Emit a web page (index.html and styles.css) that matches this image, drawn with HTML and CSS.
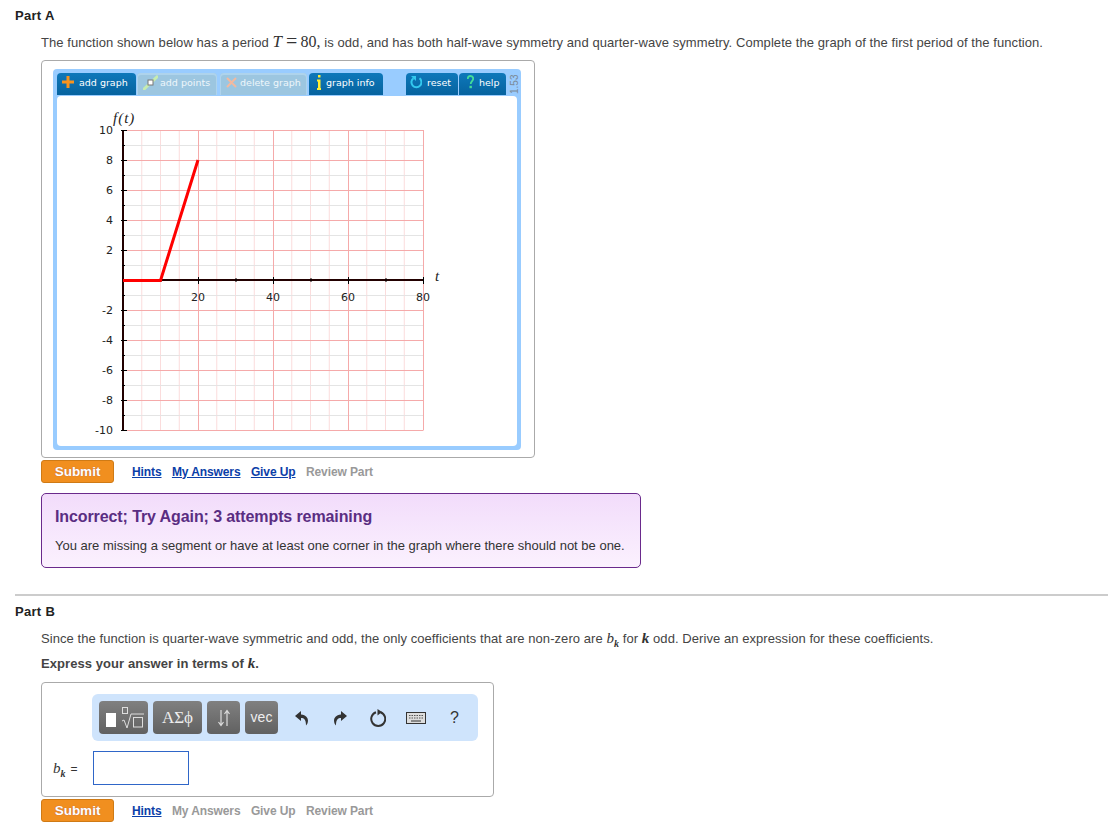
FILE: index.html
```html
<!DOCTYPE html>
<html lang="en">
<head>
<meta charset="utf-8">
<title>Part A and Part B</title>
<link rel="stylesheet" href="styles.css">
</head>
<body>
<section class="part part-a">
  <h2 class="part-title">Part A</h2>
  <p class="prompt">The function shown below has a period <span class="math big"><i class="var-t">T</i><span class="eq">=</span>80,</span> is odd, and has both half-wave symmetry and quarter-wave symmetry. Complete the graph of the first period of the function.</p>
  <div class="widget">
    <div class="tool-frame">
      <div class="toolbar">
        <button class="tool w-add"><svg class="ti" viewBox="0 0 12 12"><path d="M4.500 0h3v4.500H12v3H7.500V12h-3V7.500H0v-3h4.500z" fill="#f7931e"/></svg>add graph</button>
        <button class="tool off w-points"><svg class="ti" viewBox="0 0 15 15"><path d="M0 15 15 1" stroke="#c6ecb0" stroke-width="3"/><rect x="5" y="5" width="5" height="5" fill="#fff" stroke="#777"/></svg>add points</button>
        <button class="tool off w-delete"><svg class="ti" viewBox="0 0 11 11"><path d="M1 1l9 9M10 1 1 10" stroke="#f2b9a0" stroke-width="2"/></svg>delete graph</button>
        <button class="tool w-info"><svg class="ti" viewBox="0 0 4 16"><path d="M1 1h2.500v2.500H1zM0 5.500h3.500v8.500H4v2H0v-2h1V7.500H0z" fill="#ffee33"/></svg>graph info</button>
        <button class="tool w-reset"><svg class="ti" viewBox="0 0 12 14"><path d="M3.500 3.200a5 5 0 1 0 6 .1" fill="none" stroke="#33c8ee" stroke-width="2"/><path d="M1 1h5v5z" fill="#33c8ee"/></svg>reset</button>
        <button class="tool w-help"><svg class="ti" viewBox="0 0 7 14"><path d="M.8 4C.8 1.800 2 1 3.500 1s2.700 1 2.700 2.700c0 2.400-2.500 2.400-2.500 5.300" fill="none" stroke="#44dd99" stroke-width="1.800"/><rect x="2.500" y="10.800" width="2.400" height="2.400" fill="#44dd99"/></svg>help</button>
        <span class="version">1.53</span>
      </div>
      <div class="panel">
        <svg class="graph" viewBox="57 96 460 350" width="460" height="350">
          <path class="grid-minor-v" d="M141.750 130V430M160.500 130V430M179.250 130V430M216.750 130V430M235.500 130V430M254.250 130V430M291.750 130V430M310.500 130V430M329.250 130V430M366.750 130V430M385.500 130V430M404.250 130V430"/>
          <path class="grid-minor-h" d="M123 145.500H423M123 175.500H423M123 205.500H423M123 235.500H423M123 265.500H423M123 295.500H423M123 325.500H423M123 355.500H423M123 385.500H423M123 415.500H423"/>
          <path class="grid-major" d="M123 130.500H423.500M123 160.500H423.500M123 190.500H423.500M123 220.500H423.500M123 250.500H423.500M123 310.500H423.500M123 340.500H423.500M123 370.500H423.500M123 400.500H423.500M123 430.500H423.500M198.500 130V430M273.500 130V430M348.500 130V430M423.500 130V430"/>
          <path class="axis" d="M123 130V431M123 280H423"/>
          <path class="ticks" d="M121 130.500H127M121 160.500H127M121 190.500H127M121 220.500H127M121 250.500H127M121 310.500H127M121 340.500H127M121 370.500H127M121 400.500H127M121 430.500H127M198.500 277V284M273.500 277V284M348.500 277V284M423.500 277V284"/>
          <path class="ticks small" d="M122 145.500H125M122 175.500H125M122 205.500H125M122 235.500H125M122 265.500H125M122 295.500H125M122 325.500H125M122 355.500H125M122 385.500H125M122 415.500H125M161 278V282M236 278V282M311 278V282M386 278V282"/>
          <path class="curve" d="M123 280.500H160.500L198 160"/>
          <g class="labels">
            <text x="113" y="134" text-anchor="end">10</text>
            <text x="113" y="164" text-anchor="end">8</text>
            <text x="113" y="194" text-anchor="end">6</text>
            <text x="113" y="224" text-anchor="end">4</text>
            <text x="113" y="254" text-anchor="end">2</text>
            <text x="113" y="314" text-anchor="end">-2</text>
            <text x="113" y="344" text-anchor="end">-4</text>
            <text x="113" y="374" text-anchor="end">-6</text>
            <text x="113" y="404" text-anchor="end">-8</text>
            <text x="113" y="434" text-anchor="end">-10</text>
            <text x="198" y="301" text-anchor="middle">20</text>
            <text x="273" y="301" text-anchor="middle">40</text>
            <text x="348" y="301" text-anchor="middle">60</text>
            <text x="423" y="301" text-anchor="middle">80</text>
          </g>
          <text class="axis-name" x="113" y="123">f(t)</text>
          <text class="axis-name" x="435" y="281">t</text>
        </svg>
      </div>
    </div>
  </div>
  <div class="actions">
    <button class="submit">Submit</button>
    <a class="link" href="#">Hints</a>
    <a class="link" href="#">My Answers</a>
    <a class="link" href="#">Give Up</a>
    <span class="link-off">Review Part</span>
  </div>
  <div class="feedback">
    <h3 class="feedback-title">Incorrect; Try Again; 3 attempts remaining</h3>
    <p class="feedback-text">You are missing a segment or have at least one corner in the graph where there should not be one.</p>
  </div>
</section>
<hr class="divider">
<section class="part part-b">
  <h2 class="part-title">Part B</h2>
  <p class="prompt">Since the function is quarter-wave symmetric and odd, the only coefficients that are non-zero are <i class="math">b<sub>k</sub></i> for <i class="math bold">k</i> odd. Derive an expression for these coefficients.</p>
  <p class="instruction">Express your answer in terms of <i class="math">k</i>.</p>
  <div class="answer">
    <div class="editor-bar">
      <div class="eb-buttons">
        <span class="eb eb-root"><svg viewBox="0 0 49 33" width="49" height="33"><rect x="7" y="12" width="10" height="14" fill="#fff"/><rect x="23.500" y="6.500" width="5" height="6" fill="none" stroke="#ddd"/><path d="M23 20l2-1 3 8 4-14h13" fill="none" stroke="#ddd"/><rect x="34.500" y="16.500" width="9" height="9.500" fill="none" stroke="#ddd"/></svg></span>
        <span class="eb eb-greek">ΑΣϕ</span>
        <span class="eb eb-arrows"><svg viewBox="0 0 14 18" width="14" height="18"><path d="M4 1v15M1.500 13 4 16.500 6.500 13M10 17V2M7.500 5 10 1.500 12.500 5" fill="none" stroke="#ddd" stroke-width="1.200"/></svg></span>
        <span class="eb eb-vec">vec</span>
      </div>
      <div class="eb-actions">
        <svg class="act-undo" viewBox="0 0 14 16" width="14" height="16"><path d="M6 1 0 6l6 5V8c3 0 5 1.500 5 7.500 3-3 3.500-10-5-11z" fill="#333"/></svg>
        <svg class="act-redo" viewBox="0 0 14 16" width="14" height="16"><path d="M8 1l6 5-6 5V8c-3 0-5 1.500-5 7.500-3-3-3.500-10 5-11z" fill="#333"/></svg>
        <svg class="act-reset" viewBox="0 0 16 18" width="16" height="18"><path d="M6 3.300a7 7 0 1 0 4.500 0" fill="none" stroke="#333" stroke-width="2"/><path d="M7.500 0v6.500l4.500-3.500z" fill="#333"/></svg>
        <svg class="act-keys" viewBox="0 0 20 12" width="20" height="12"><rect x=".5" y=".5" width="19" height="11" fill="#ddd" stroke="#333"/><path d="M3 3.500h14M3 6h14" stroke="#555" stroke-dasharray="1.500 1"/><path d="M5 9h10" stroke="#333"/></svg>
        <span class="eb-help">?</span>
      </div>
    </div>
    <div class="answer-row">
      <label class="answer-label"><i class="math">b<sub>k</sub></i><span class="label-eq">=</span></label>
      <input class="answer-input" type="text" aria-label="answer">
    </div>
  </div>
  <div class="actions last">
    <button class="submit">Submit</button>
    <a class="link" href="#">Hints</a>
    <span class="link-off">My Answers</span>
    <span class="link-off">Give Up</span>
    <span class="link-off">Review Part</span>
  </div>
</section>
</body>
</html>
```
FILE: styles.css
```css
* { box-sizing: border-box; }
html, body { margin: 0; padding: 0; }
body {
  width: 1108px;
  height: 835px;
  overflow: hidden;
  background: #fff;
  color: #444;
  font-family: "Liberation Sans", Arial, sans-serif;
  font-size: 13px;
}
.part-a { padding-top: 8px; }
.part-title {
  margin: 0 0 0 15px;
  font-size: 13px;
  line-height: 15px;
  font-weight: bold;
  color: #222;
  letter-spacing: .3px;
}
.prompt {
  margin: 12px 0 0 41px;
  line-height: 16px;
  letter-spacing: .065px;
  white-space: nowrap;
}
.math { font-family: "Liberation Serif", serif; font-size: 15px; color: #333; }
.math.big { font-size: 16px; line-height: 0; }
.var-t { font-size: 17px; }
.eq { margin: 0 3px 0 4px; font-size: 20px; line-height: 0; vertical-align: -1px; }
.math.bold { font-weight: bold; }
.math sub { font-size: 10px; font-weight: bold; line-height: 0; }
.widget {
  width: 494px;
  height: 398px;
  margin: 9px 0 0 41px;
  padding: 8px 13px 7px 11px;
  border: 1px solid #aaa;
  border-radius: 4px;
}
.tool-frame {
  height: 381px;
  padding: 4px;
  background: #99ccff;
  border-radius: 4px;
}
.toolbar { display: flex; height: 22px; position: relative; }
.tool {
  display: flex;
  align-items: center;
  height: 22px;
  padding: 0 0 4px 0;
  border: 0;
  border-radius: 4px 4px 0 0;
  background: linear-gradient(#0e78ba, #06639f);
  color: #fff;
  font: 9.500px "DejaVu Sans", sans-serif;
  white-space: nowrap;
}
.tool.off {
  background: #9cc6e0;
  box-shadow: inset 0 1px 0 1px #aed3ec;
  color: #eef6fb;
}
.ti { flex: none; display: block; }
.w-add { width: 79px; padding-left: 5px; gap: 5px; }
.w-add .ti { width: 12px; height: 12px; }
.w-points { width: 80px; margin-left: 1px; padding-left: 6px; gap: 2px; }
.w-points .ti { width: 15px; height: 15px; }
.w-delete { width: 87px; margin-left: 3px; padding-left: 6px; gap: 3px; }
.w-delete .ti { width: 11px; height: 11px; }
.w-info { width: 74px; margin-left: 2px; padding-left: 8px; gap: 5px; }
.w-info .ti { width: 4px; height: 16px; }
.w-reset { width: 52px; margin-left: 23px; padding-left: 4px; gap: 5px; }
.w-reset .ti { width: 12px; height: 14px; }
.w-help { width: 47px; margin-left: 1px; padding-left: 8px; gap: 5px; }
.w-help .ti { width: 7px; height: 14px; }
.version {
  position: absolute;
  right: -4px;
  top: 0;
  width: 12px;
  height: 22px;
  writing-mode: vertical-rl;
  transform: rotate(180deg);
  font: 10px/12px "Liberation Sans", sans-serif;
  color: #7b8a99;
  text-align: center;
}
.panel {
  width: 460px;
  height: 350px;
  margin-top: 1px;
  background: #fff;
  border-radius: 4px;
}
.graph { display: block; }
.grid-minor-v { stroke: #fbdcdc; fill: none; }
.grid-minor-h { stroke: #e4e4e4; fill: none; }
.grid-major { stroke: #f5aaaa; fill: none; }
.axis { stroke: #200; stroke-width: 2; fill: none; }
.ticks { stroke: #000; fill: none; }
.curve { stroke: #f00; stroke-width: 3; fill: none; stroke-linejoin: round; }
.labels { font: 11px "DejaVu Sans", sans-serif; fill: #222; }
.axis-name { font: italic 15px "Liberation Serif", serif; fill: #222; letter-spacing: 1px; }
.actions {
  display: flex;
  align-items: center;
  height: 23px;
  margin: 2px 0 0 41px;
  font-size: 12px;
}
.submit {
  width: 73px;
  height: 23px;
  margin-right: 18px;
  padding: 0;
  border: 1px solid #cf7a15;
  border-radius: 3px;
  background: #f18f1f;
  color: #fff;
  font: bold 13.500px "Liberation Sans", Arial, sans-serif;
  text-shadow: 0 0 1px #a55;
}
.link {
  margin-right: 10.400px;
  color: #0b3ea8;
  font-weight: bold;
  letter-spacing: -.1px;
  text-decoration: underline;
}
.link-off {
  margin-right: 10.400px;
  color: #999;
  font-weight: bold;
  letter-spacing: -.1px;
}
.feedback {
  width: 600px;
  height: 75px;
  margin: 10px 0 0 41px;
  padding: 13px 13px 0;
  border: 1px solid #6a2a8c;
  border-radius: 5px;
  background: linear-gradient(#f2dcfb, #fbf1fe);
}
.feedback-title {
  margin: 0;
  color: #5a2d82;
  font-size: 16px;
  line-height: 20px;
  font-weight: bold;
  letter-spacing: -.1px;
}
.feedback-text {
  margin: 11px 0 0;
  color: #333;
  line-height: 16px;
  white-space: nowrap;
}
.divider {
  height: 2px;
  margin: 26px 0 0 15px;
  border: 0;
  background: #ccc;
}
.part-b { padding-top: 8px; }
.part-b .prompt { margin-top: 11px; }
.instruction {
  margin: 8px 0 0 41px;
  font-weight: bold;
  line-height: 16px;
  letter-spacing: .07px;
}
.answer {
  position: relative;
  width: 453px;
  height: 115px;
  margin: 10px 0 0 41px;
  padding: 11px 15px 0 50px;
  border: 1px solid #aaa;
  border-radius: 4px;
}
.editor-bar {
  display: flex;
  align-items: center;
  justify-content: space-between;
  width: 386px;
  height: 47px;
  padding: 0 19px 0 7px;
  background: #cfe4fc;
  border-radius: 6px;
}
.eb-buttons { display: flex; gap: 5px; }
.eb {
  display: flex;
  align-items: center;
  justify-content: center;
  height: 33px;
  border-radius: 4px;
  background: linear-gradient(#808080, #616161);
  color: #eee;
}
.eb-root, .eb-greek { width: 49px; }
.eb-arrows, .eb-vec { width: 33px; }
.eb-greek { font: 17px "Liberation Serif", serif; }
.eb-vec { padding-bottom: 2px; font: 14px "Liberation Sans", sans-serif; }
.eb-actions { display: flex; align-items: center; }
.act-redo { margin-left: 24px; }
.act-reset { margin-left: 23px; }
.act-keys { margin-left: 20px; }
.eb-help { margin-left: 24px; font-size: 16px; color: #333; }
.answer-row { display: flex; align-items: center; margin-top: 10px; }
.answer-label {
  display: flex;
  align-items: baseline;
  flex: none;
  width: 51px;
  margin-left: -49px;
  padding-left: 10px;
  font-size: 12px;
  white-space: nowrap;
  color: #333;
}
.label-eq { margin-left: 5px; }
.answer-input {
  width: 96px;
  height: 34px;
  margin-left: -1px;
  border: 1px solid #2f66c8;
  outline: 0;
  background: #fff;
}
```
